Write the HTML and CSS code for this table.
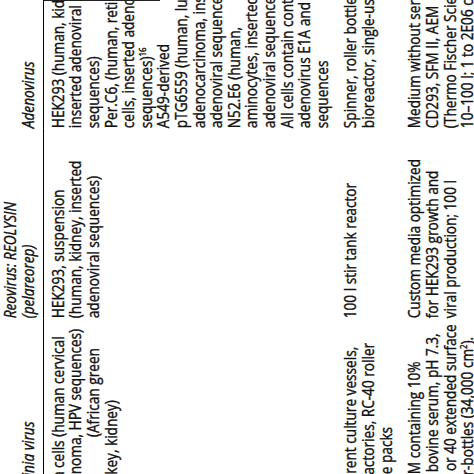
FILE: index.html
```html
<!DOCTYPE html>
<html>
<head>
<meta charset="utf-8">
<link rel="stylesheet" href="styles.css">
</head>
<body>
<div class="page">
  <div class="rot">
    <div class="table">
      <div class="th"><div>Vaccinia virus</div></div>
      <div class="th"><div>Reovirus: REOLYSIN<br>(pelareorep)</div></div>
      <div class="th"><div>Adenovirus</div></div>

      <div class="td">HeLa cells (human cervical<br>carcinoma, HPV sequences)<br><span class="ind">(African green</span><br>monkey, kidney)</div>
      <div class="td">HEK293, suspension<br>(human, kidney, inserted<br>adenoviral sequences)</div>
      <div class="td">HEK293 (human, kidney,<br>inserted adenoviral<br>sequences)<br>Per.C6, (human, retinal<br>cells, inserted adenoviral<br>sequences)<sup>16</sup><br>A549-derived<br>pTG6559 (human, lung<br>adenocarcinoma, inserted<br>adenoviral sequences)<br>N52.E6 (human,<br>aminocytes, inserted<br>adenoviral sequences)<br>All cells contain contiguous<br>adenovirus E1A and E1B<br>sequences</div>

      <div class="td">Different culture vessels,<br>cell factories, RC-40 roller<br>bottle packs</div>
      <div class="td">100 l stir tank reactor</div>
      <div class="td">Spinner, roller bottle,<br>bioreactor, single-use</div>

      <div class="td">DMEM containing 10%<br>fetal bovine serum, pH 7.3,<br>flask or 40 extended surface<br>roller-bottles (34,000 cm<sup class="sq">2</sup>).</div>
      <div class="td">Custom media optimized<br>for HEK293 growth and<br>viral production; 100 l</div>
      <div class="td">Medium without serum<br>CD293, SFM II, AEM<br>(Thermo Fischer Scientific)<br>10–100 l; 1 to 2E06 cells/ml</div>
    </div>
  </div>
  <div class="edge"></div>
</div>
</body>
</html>
```

FILE: styles.css
```css
html, body {
  margin: 0;
  padding: 0;
  background: #ffffff;
}

.page {
  position: relative;
  width: 474px;
  height: 474px;
  overflow: hidden;
  background: #ffffff;
  color: #111111;
  font-family: "Open Sans", "Noto Sans", sans-serif;
  font-size: 15.5px;
  font-weight: 400;
  line-height: 17.6px;
  -webkit-text-stroke: 0.4px #111111;
}

.rot {
  width: 539px;
  height: 474px;
  transform-origin: 0 0;
  transform: translate(0, 474px) rotate(-90deg) scaleX(0.88);
}

.table {
  display: grid;
  grid-template-columns: 211px 216px 420px;
  margin-left: -34px;
}

.th {
  display: flex;
  flex-direction: column;
  justify-content: flex-end;
  padding: 2px 0 6px;
  border-bottom: 1.3px solid #000;
  font-style: italic;
  white-space: nowrap;
}

.td {
  padding: 5.6px 0;
  white-space: nowrap;
}

.ind {
  display: inline-block;
  margin-left: 76px;
}

sup {
  font-size: 9px;
  line-height: 0;
  vertical-align: 6px;
}

.edge {
  position: absolute;
  left: 44px;
  top: 0;
  width: 116px;
  height: 1px;
  background: #222;
}
```
